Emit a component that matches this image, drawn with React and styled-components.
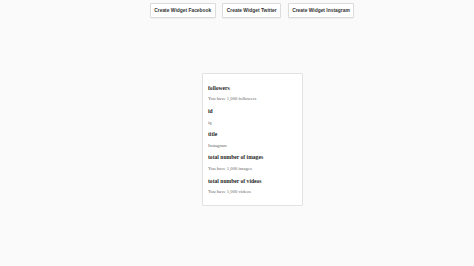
import styled, { createGlobalStyle } from "styled-components";

const GlobalStyle = createGlobalStyle`
  html, body {
    margin: 0;
    background: #fafafa;
  }
`;

const widgets = [
  { label: "followers", text: "You have 1,000 followers" },
  { label: "id", text: "ig" },
  { label: "title", text: "Instagram" },
  { label: "total number of images", text: "You have 1,000 images" },
  { label: "total number of videos", text: "You have 1,000 videos" },
];

const App = () => {
  return (
    <Page>
      <GlobalStyle />
      <Toolbar>
        <Button>Create Widget Facebook</Button>
        <Button>Create Widget Twitter</Button>
        <Button>Create Widget Instagram</Button>
      </Toolbar>
      <Card>
        {widgets.map((w) => (
          <Field key={w.label}>
            <Label>{w.label}</Label>
            <Value>{w.text}</Value>
          </Field>
        ))}
      </Card>
    </Page>
  );
};

const Page = styled.div`
  min-height: 266px;
  box-sizing: border-box;
  padding: 3px 0 0 30px;
  display: flex;
  flex-direction: column;
  align-items: center;
`;

const Toolbar = styled.div`
  display: flex;
  gap: 6.5px;
`;

const Button = styled.button`
  height: 15px;
  padding: 0 3.5px;
  background: #fff;
  border: 1px solid #dcdcdc;
  border-radius: 1px;
  box-shadow: 0 0.5px 1px rgba(0, 0, 0, 0.05);
  font-family: "Liberation Sans", Arial, sans-serif;
  font-weight: bold;
  font-size: 4.9px;
  color: #333;
  cursor: pointer;
`;

const Card = styled.div`
  margin-top: 55px;
  width: 101px;
  box-sizing: border-box;
  padding: 10.5px 5.5px 4.5px;
  background: #fff;
  border: 1px solid #e2e2e2;
  border-radius: 1px;
  font-family: "Liberation Serif", "Times New Roman", serif;
`;

const Field = styled.div`
  margin-bottom: 6px;
`;

const Label = styled.div`
  font-size: 5.6px;
  line-height: 6.5px;
  font-weight: bold;
  color: #1e1e1e;
  margin-bottom: 5.3px;
`;

const Value = styled.div`
  font-size: 4.7px;
  line-height: 5.5px;
  color: #666;
`;

export default App;
